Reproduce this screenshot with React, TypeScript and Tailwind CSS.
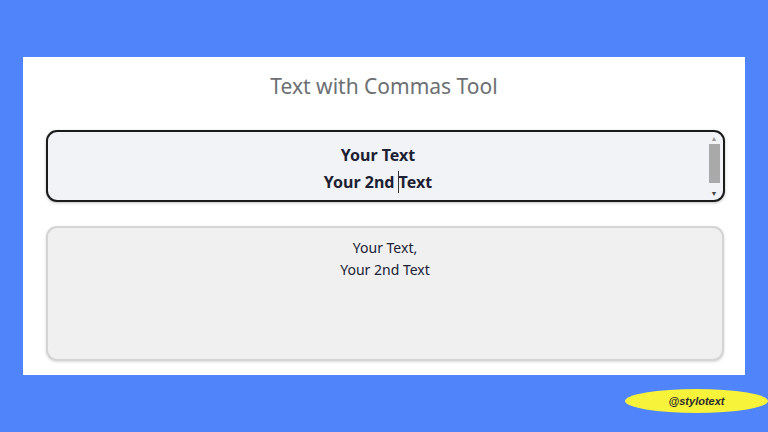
import React from 'react';

const App: React.FC = () => {
  return (
    <div className="w-[768px] h-[432px] bg-[#4f84fa] overflow-hidden relative" style={{ fontFamily: '"Noto Sans", "Open Sans", sans-serif' }}>
      <div className="ml-[23px] mt-[57px] w-[722px] h-[318px] bg-white pt-[14px] px-[23px]">
        <h1 className="text-center text-[21px] leading-[30px] text-[#6b6f72] font-normal">Text with Commas Tool</h1>

        {/* input area */}
        <div className="mt-[29px] w-[679px] h-[72px] rounded-[11px] border-2 border-[#1b1b1b] bg-[#f1f3f6] shadow-[0_1px_3px_rgba(0,0,0,0.25)] flex">
          <div className="flex-1 flex flex-col items-center pt-[10px] text-[16px] leading-[27px] font-bold text-[#1d1f33]">
            <p>Your Text</p>
            <p>
              Your 2nd <span className="border-l border-[#333] -ml-[1px]">Text</span>
            </p>
          </div>
          <div className="w-[12px] mr-[3px] flex flex-col items-center py-[1px]">
            <span className="text-[7px] leading-[11px] text-[#9a9a9a]">▲</span>
            <div className="w-[11px] h-[39px] bg-[#a9a9a9]" />
            <div className="flex-1" />
            <span className="text-[7px] leading-[11px] text-[#444]">▼</span>
          </div>
        </div>

        {/* output area */}
        <div className="mt-[24px] w-[678px] h-[135px] rounded-[11px] border-2 border-[#d4d4d4] bg-[#f0f0f0] shadow-[0_1px_3px_rgba(0,0,0,0.15)] flex flex-col items-center pt-[9px] text-[14px] leading-[22px] text-[#202236]">
          <p>Your Text,</p>
          <p>Your 2nd Text</p>
        </div>
      </div>

      <div className="absolute left-[625px] top-[389px] w-[143px] h-[24px] rounded-[50%] bg-[#f7f23a] flex items-center justify-center">
        <span className="text-[11px] font-bold italic text-[#2b2b2b]" style={{ fontFamily: '"Liberation Sans", Arial, sans-serif' }}>@stylotext</span>
      </div>
    </div>
  );
};

export default App;
